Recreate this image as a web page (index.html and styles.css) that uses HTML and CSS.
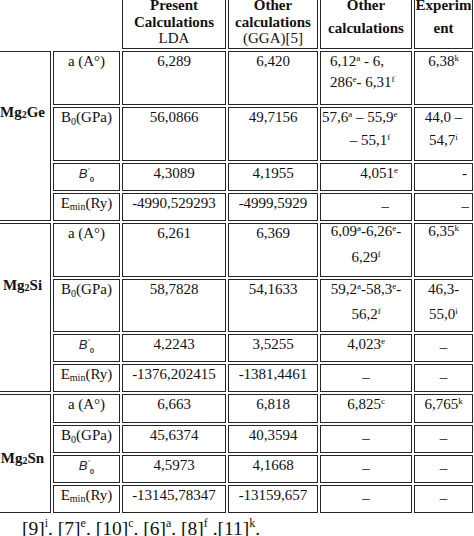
FILE: index.html
```html
<!DOCTYPE html>
<html>
<head>
<meta charset="utf-8">
<link rel="stylesheet" href="styles.css">
</head>
<body>
<div class="page">
<table class="data">
<colgroup><col class="c1"><col class="c2"><col class="c3"><col class="c4"><col class="c5"><col class="c6"></colgroup>
<tr class="hd">
<td class="blank"></td><td class="blank"></td>
<td class="hc"><div class="hl b">Present</div><div class="hl b">Calculations</div><div class="hl">LDA</div></td>
<td class="hc"><div class="hl b">Other</div><div class="hl b">calculations</div><div class="hl">(GGA)[5]</div></td>
<td class="hc"><div class="h1 b">Other</div><div class="h2 b">calculations</div></td>
<td class="hc exp"><div class="h1 b">Experim</div><div class="h2 b">ent</div></td>
</tr>

<tr class="r54">
<td rowspan="4" class="cmp ge"><b>Mg<sub class="s2">2</sub>Ge</b></td>
<td>a (A°)</td><td>6,289</td><td>6,420</td>
<td class="al"><div>6,12<sup>a</sup> - 6,</div><div class="g3">286<sup>e</sup>- 6,31<sup>f</sup></div></td>
<td>6,38<sup>k</sup></td>
</tr>
<tr class="r54">
<td>B<sub class="s0">0</sub>(GPa)</td><td>56,0866</td><td>49,7156</td>
<td><div class="l1">57,6<sup>a</sup> – 55,9<sup>e</sup></div><div class="g5 l2">– 55,1<sup>f</sup></div></td>
<td><div>44,0 –</div><div class="g5">54,7<sup>i</sup></div></td>
</tr>
<tr class="r28">
<td><span class="bp"><i class="bp-b">B</i><span class="bp-p">′</span><span class="bp-z">0</span></span></td>
<td>4,3089</td><td>4,1955</td>
<td class="ar13">4,051<sup>e</sup></td>
<td class="ar5">-</td>
</tr>
<tr class="r28">
<td>E<sub class="smin">min</sub>(Ry)</td><td>-4990,529293</td><td>-4999,5929</td>
<td class="ar22"><span class="dash">–</span></td>
<td class="ar3"><span class="dash">–</span></td>
</tr>

<tr class="r54">
<td rowspan="4" class="cmp si"><b>Mg<sub class="s2">2</sub>Si</b></td>
<td>a (A°)</td><td>6,261</td><td>6,369</td>
<td><div class="f2">6,09<sup>a</sup>-6,26<sup>e</sup>-</div><div class="g8">6,29<sup>f</sup></div></td>
<td><div class="f2">6,35<sup>k</sup></div></td>
</tr>
<tr class="r53">
<td>B<sub class="s0">0</sub>(GPa)</td><td>58,7828</td><td>54,1633</td>
<td><div>59,2<sup>a</sup>-58,3<sup>e</sup>-</div><div class="g7">56,2<sup>f</sup></div></td>
<td><div>46,3-</div><div class="g7">55,0<sup>i</sup></div></td>
</tr>
<tr class="r28">
<td><span class="bp"><i class="bp-b">B</i><span class="bp-p">′</span><span class="bp-z">0</span></span></td>
<td>4,2243</td><td>3,5255</td>
<td>4,023<sup>e</sup></td>
<td><span class="dash">–</span></td>
</tr>
<tr class="r28">
<td>E<sub class="smin">min</sub>(Ry)</td><td>-1376,202415</td><td>-1381,4461</td>
<td><span class="dash">–</span></td>
<td><span class="dash">–</span></td>
</tr>

<tr class="r29">
<td rowspan="4" class="cmp sn"><b>Mg<sub class="s2">2</sub>Sn</b></td>
<td>a (A°)</td><td>6,663</td><td>6,818</td>
<td>6,825<sup>c</sup></td>
<td>6,765<sup>k</sup></td>
</tr>
<tr class="r28">
<td>B<sub class="s0">0</sub>(GPa)</td><td>45,6374</td><td>40,3594</td>
<td><span class="dash">–</span></td>
<td><span class="dash">–</span></td>
</tr>
<tr class="r28">
<td><span class="bp"><i class="bp-b">B</i><span class="bp-p">′</span><span class="bp-z">0</span></span></td>
<td>4,5973</td><td>4,1668</td>
<td><span class="dash">–</span></td>
<td><span class="dash">–</span></td>
</tr>
<tr class="r28">
<td>E<sub class="smin">min</sub>(Ry)</td><td>-13145,78347</td><td>-13159,657</td>
<td><span class="dash">–</span></td>
<td><span class="dash">–</span></td>
</tr>
</table>
<div class="notes">[9]<sup>i</sup>. [7]<sup>e</sup>. [10]<sup>c</sup>. [6]<sup>a</sup>. [8]<sup>f</sup> .[11]<sup>k</sup>.</div>
</div>
</body>
</html>
```

FILE: styles.css
```css
html, body {
  margin: 0;
  padding: 0;
  background: #ffffff;
}
body {
  font-family: "Liberation Serif", "Times New Roman", serif;
  color: #111111;
}
.page {
  width: 474px;
  height: 536px;
  overflow: hidden;
}
.data {
  border-collapse: separate;
  border-spacing: 2px;
  table-layout: fixed;
  width: 481px;
  margin: -6px 0 0 -6px;
  font-size: 15px;
  line-height: 18px;
}
.c1 { width: 55px; }
.c2 { width: 67px; }
.c3 { width: 104px; }
.c4 { width: 90px; }
.c5 { width: 92px; }
.c6 { width: 59px; }

.data td {
  border: 1px solid #262626;
  padding: 0;
  text-align: center;
  vertical-align: top;
  box-sizing: border-box;
  white-space: nowrap;
}
.data td.blank { border: none; }

.hd { height: 53px; }
.r54 { height: 54px; }
.r53 { height: 53px; }
.r29 { height: 29px; }
.r28 { height: 28px; }

.b { font-weight: bold; }
.hl { line-height: 16.7px; }
.h1 { line-height: 16px; }
.h2 { line-height: 31px; }
.exp { overflow: visible; }

.cmp { font-size: 15px; }
.ge { padding-top: 51px !important; padding-right: 2px !important; }
.si { padding-top: 52px !important; padding-right: 2px !important; }
.sn { padding-top: 54px !important; padding-right: 2px !important; }

sup {
  font-size: 9px;
  line-height: 0;
  vertical-align: 5px;
}
sub { line-height: 0; }
.s2 { font-size: 10px; vertical-align: -1px; }
.s0 { font-size: 10px; vertical-align: -3px; }
.smin { font-size: 10px; vertical-align: -2px; }

.al { text-align: left !important; padding-left: 9px !important; }
.l1 { text-align: left; padding-left: 1px; }
.l2 { padding-left: 8px; }
.g3 { padding-top: 3px; }
.g5 { padding-top: 5px; }
.g7 { padding-top: 7px; }
.g8 { padding-top: 8px; }
.f2 { margin-top: -2px; }

.ar13 { text-align: right !important; padding-right: 13px !important; }
.ar22 { text-align: right !important; padding-right: 22px !important; }
.ar5 { text-align: right !important; padding-right: 5px !important; }
.ar3 { text-align: right !important; padding-right: 3px !important; }

.dash { vertical-align: -3px; }

.bp {
  font-family: "Liberation Sans", Arial, sans-serif;
  color: #1d2740;
  font-size: 13px;
  line-height: 0;
}
.bp-b {
  font-style: italic;
}
.bp-p {
  font-size: 8px;
  vertical-align: 5px;
  margin-left: 1px;
}
.bp-z {
  font-size: 8px;
  font-weight: bold;
  color: #3a4a5a;
  vertical-align: -4px;
}

.notes {
  font-size: 19.5px;
  line-height: 22px;
  margin-top: 3px;
  padding-left: 22px;
  white-space: nowrap;
}
.notes sup {
  font-size: 12px;
  vertical-align: 8px;
}
```
